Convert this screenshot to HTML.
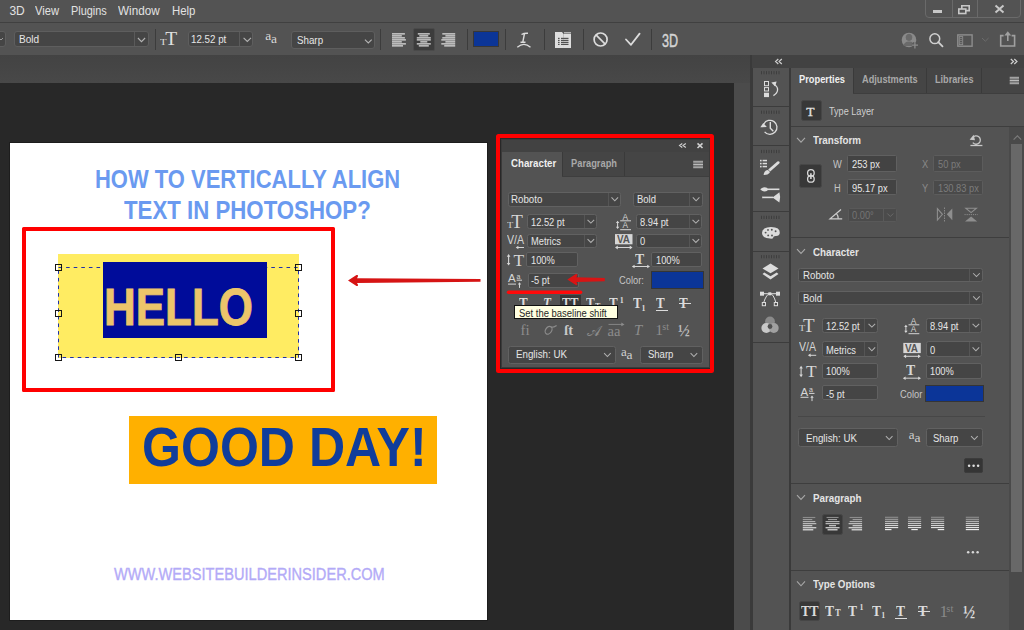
<!DOCTYPE html>
<html><head><meta charset="utf-8">
<style>
*{margin:0;padding:0;box-sizing:border-box}
html,body{width:1024px;height:630px;overflow:hidden;background:#282828;font-family:"Liberation Sans",sans-serif;color:#dcdcdc}
.a{position:absolute}
.t{position:absolute;white-space:nowrap;line-height:1}
.inp{position:absolute;background:#454545;border:1px solid #575757;border-radius:2px}
.dd{position:absolute;background:#454545;border:1px solid #575757;border-radius:2px}
.dv{position:absolute;top:0;bottom:0;width:1px;background:#585858}
.sep{position:absolute;width:1px;background:#3c3c3c}
svg{position:absolute;overflow:visible}
</style></head><body>

<!-- menu bar -->
<div class="a" style="left:0;top:0;width:1024px;height:22px;background:#535353"></div>
<div class="a" style="left:0;top:22px;width:1024px;height:1px;background:#404040"></div>
<!-- options bar -->
<div class="a" style="left:0;top:23px;width:1024px;height:32px;background:#535353"></div>
<!-- tab band -->
<div class="a" style="left:0;top:55px;width:750px;height:28.3px;background:linear-gradient(#434343,#484848)"></div>
<!-- vertical strip -->
<div class="a" style="left:734px;top:83.3px;width:16px;height:547px;background:#4b4b4b"></div>

<!-- dock -->


<!-- document -->
<div class="a" style="left:10px;top:143px;width:477px;height:476.5px;background:#fff;box-shadow:0 0 0 1px #1d1d1d"></div>

<!-- floating char panel -->



<!-- menu text -->
<div class="t" style="left:9.4px;top:5px;font-size:12px;color:#e2e2e2">3D</div>
<div class="t" style="left:35.2px;top:5px;font-size:12px;color:#e2e2e2;transform:scaleX(0.93);transform-origin:0 0">View</div>
<div class="t" style="left:70.9px;top:5px;font-size:12px;color:#e2e2e2;transform:scaleX(0.91);transform-origin:0 0">Plugins</div>
<div class="t" style="left:118.2px;top:5px;font-size:12px;color:#e2e2e2;transform:scaleX(0.975);transform-origin:0 0">Window</div>
<div class="t" style="left:171.5px;top:5px;font-size:12px;color:#e2e2e2;transform:scaleX(0.95);transform-origin:0 0">Help</div>
<!-- window controls -->
<div class="a" style="left:924.5px;top:-2px;width:96.5px;height:19.5px;border:1px solid #6a6a6a;border-radius:0 0 4px 4px"></div>
<div class="a" style="left:952px;top:0;width:1px;height:17px;background:#6a6a6a"></div>
<div class="a" style="left:977px;top:0;width:1px;height:17px;background:#6a6a6a"></div>
<div class="a" style="left:933px;top:10px;width:9px;height:3px;background:#c8c8c8"></div>
<svg style="left:0;top:0" width="1024" height="30">
<g fill="none" stroke="#c8c8c8" stroke-width="1.6">
<rect x="958.8" y="9" width="7" height="4.5"/>
<path d="M961.8,9 V5.8 H969.2 V10.6 H965.8"/>
<path d="M995.5,5.5 L1003.5,12.5 M1003.5,5.5 L995.5,12.5" stroke-width="2"/>
</g>
</svg>


<!-- options bar content -->
<div class="dd" style="left:-10px;top:30.5px;width:15.5px;height:16px;border-color:#5e5e5e;border-radius:3px"></div>
<svg style="left:0;top:0" width="10" height="60"><path d="M-1,38 L1,40 L3,38" fill="none" stroke="#9a9a9a" stroke-width="1"/></svg>
<div class="dd" style="left:14px;top:30.5px;width:134.5px;height:16.5px;border-color:#5e5e5e;border-radius:3px"><div class="dv" style="left:118.5px;background:#5a5a5a"></div></div>
<div class="t" style="left:19.4px;top:34px;font-size:10.5px;color:#e6e6e6;transform:scaleX(0.96);transform-origin:0 0">Bold</div>
<div class="sep" style="left:154.5px;top:29px;height:21px"></div>
<div class="t" style="left:160.30px;top:38px;font-size:9px;color:#e0e0e0;font-family:'Liberation Serif';transform:scaleX(1.2);transform-origin:0 0">T</div>
<div class="t" style="left:165.30px;top:29px;font-size:19.5px;color:#e0e0e0;font-family:'Liberation Serif'">T</div>
<div class="dd" style="left:187.9px;top:31px;width:65.5px;height:15.5px;border-color:#5e5e5e;border-radius:3px"><div class="dv" style="left:50.6px;background:#5a5a5a"></div></div>
<div class="t" style="left:190.6px;top:34.3px;font-size:10.5px;color:#e6e6e6;transform:scaleX(0.93);transform-origin:0 0">12.52 pt</div>
<div class="t" style="left:265.3px;top:29.3px;font-size:13.5px;font-family:'Liberation Serif';color:#d8d8d8">a</div>
<div class="t" style="left:271px;top:32.3px;font-size:13.5px;font-family:'Liberation Serif';color:#d8d8d8">a</div>
<div class="dd" style="left:290.9px;top:31.3px;width:84px;height:18px;border-color:#5e5e5e;border-radius:3px"></div>
<div class="t" style="left:296.7px;top:34.8px;font-size:10.5px;color:#e6e6e6;transform:scaleX(0.93);transform-origin:0 0">Sharp</div>
<div class="sep" style="left:380px;top:29px;height:21px"></div>
<div class="a" style="left:413px;top:28px;width:22px;height:23px;background:#3c3c3c;border:1px solid #4a4a4a;border-radius:2px"></div>
<div class="sep" style="left:467px;top:29px;height:21px"></div>
<div class="a" style="left:472.8px;top:30.9px;width:26px;height:16.5px;background:#0b3597;border:1px solid #373737"></div>
<div class="sep" style="left:504.5px;top:29px;height:21px"></div>
<div class="sep" style="left:543.5px;top:29px;height:21px"></div>
<div class="sep" style="left:582.5px;top:29px;height:21px"></div>
<div class="sep" style="left:651px;top:29px;height:21px"></div>
<svg style="left:0;top:0" width="1024" height="60">
<g stroke="#e0e0e0" stroke-width="1.1" fill="none">
<path d="M392,33.9h12.9 M392,35.9h9.8 M392,37.9h12.9 M392,39.9h13.9 M392,41.9h9.8 M392,43.9h13.9 M392,45.9h11"/>
<path d="M417.8,33.9h12 M419.3,35.9h9 M416.8,37.9h14 M416.8,39.9h14 M420.3,41.9h7 M416.8,43.9h14 M418.8,45.9h10"/>
<path d="M442.3,33.9h12.9 M445.4,35.9h9.8 M442.3,37.9h12.9 M441.3,39.9h13.9 M445.4,41.9h9.8 M441.3,43.9h13.9 M444.2,45.9h11"/>
</g>
<g fill="none" stroke="#dcdcdc">
<path d="M521.5,34.5 Q524,33 528,33.2 M524.5,33.5 L522.8,42.2 M520.5,42.3 L525.5,42.3" stroke-width="1.4"/>
<path d="M517.3,47.3 Q524,41.5 530.5,47.3" stroke-width="1.3"/>
</g>
<path d="M555,32 H562 L563.5,34 V48 H555 Z" fill="#dedede"/>
<path d="M563.5,34 H571 V48 H563 Z" fill="#dedede"/>
<path d="M564,32.3 H571 V33.4 H564 Z" fill="#dedede"/>
<g fill="#535353"><rect x="558" y="37.8" width="1.6" height="1.2"/><rect x="558" y="39.8" width="1.6" height="1.2"/><rect x="558" y="41.8" width="1.6" height="1.2"/><rect x="558" y="43.8" width="1.6" height="1.2"/>
<rect x="561" y="37.8" width="7.5" height="1.2"/><rect x="561" y="39.8" width="7.5" height="1.2"/><rect x="561" y="41.8" width="7.5" height="1.2"/><rect x="561" y="43.8" width="7.5" height="1.2"/></g>
<circle cx="600.6" cy="39.5" r="6.5" fill="none" stroke="#dcdcdc" stroke-width="1.7"/>
<path d="M596,34.9 L605.2,44.1" stroke="#dcdcdc" stroke-width="1.7"/>
<path d="M626,39.5 L631,44.8 L639.6,33.6" fill="none" stroke="#dcdcdc" stroke-width="1.8" stroke-linecap="round" stroke-linejoin="round"/>
</svg>
<div class="t" style="left:662.30px;top:32px;font-size:18.5px;color:#d4d4d4;transform:scaleX(0.68);transform-origin:0 0;-webkit-text-stroke:0.5px #d4d4d4">3D</div>
<svg style="left:0;top:0" width="1024" height="60">
<circle cx="909" cy="40" r="7.3" fill="#8a8a8a"/>
<path d="M909,33.8 a3.3,3.6 0 1 1 -0.01,0 Z" fill="#6a6a6a"/>
<path d="M903.5,46 Q904,41.5 909,41.5 Q914,41.5 914.5,46 Z" fill="#6a6a6a"/>
<path d="M911.8,45.2 H918 M914.9,42 V48.4" stroke="#535353" stroke-width="3.2"/>
<path d="M911.8,45.2 H918 M914.9,42 V48.4" stroke="#8a8a8a" stroke-width="1.3"/>
<circle cx="934.8" cy="38.7" r="4.9" fill="none" stroke="#d0d0d0" stroke-width="1.5"/>
<path d="M938.3,42.2 L942.5,46.4" stroke="#d0d0d0" stroke-width="1.8" stroke-linecap="round"/>
<rect x="957.8" y="34.9" width="14.3" height="11.3" fill="none" stroke="#8e8e8e" stroke-width="1.4"/>
<rect x="959.3" y="36.6" width="3.4" height="8" fill="none" stroke="#8e8e8e" stroke-width="0.9"/><circle cx="961" cy="38.4" r="0.75" fill="#8e8e8e"/><circle cx="961" cy="40.6" r="0.75" fill="#8e8e8e"/><circle cx="961" cy="42.8" r="0.75" fill="#8e8e8e"/>
<path d="M982,38 L985.3,41.2 L988.6,38" fill="none" stroke="#6c6c6c" stroke-width="1"/>
<path d="M1003.6,35.6 H1000.7 V46 H1014.6 V35.6 H1011.6" fill="none" stroke="#a0a0a0" stroke-width="1.6"/>
<path d="M1007.8,41 V33.5" stroke="#a0a0a0" stroke-width="1.6"/>
<path d="M1004.4,35.6 L1007.8,31.3 L1011.2,35.6 Z" fill="#a0a0a0"/>
</svg>

<svg style="left:0;top:0" width="1024" height="60"><g fill="none" stroke="#b4b4b4" stroke-width="1.1">
<path d="M137.9,38 L141.5,41.6 L145.1,38"/>
<path d="M243.6,37.8 L247.3,41.5 L251,37.8"/>
<path d="M364.9,39.6 L368.3,43 L371.7,39.6"/>
</g></svg>
<!-- /opt-chev -->
<!-- document content -->
<div class="t" style="left:94.7px;top:167px;font-size:25.6px;font-weight:bold;color:#6a9af0;transform:scaleX(0.8585);transform-origin:0 0">HOW TO VERTICALLY ALIGN</div>
<div class="t" style="left:123.9px;top:198px;font-size:25.6px;font-weight:bold;color:#6a9af0;transform:scaleX(0.869);transform-origin:0 0">TEXT IN PHOTOSHOP?</div>
<div class="a" style="left:22px;top:227px;width:313px;height:164.5px;border:4.3px solid #ff0000;border-radius:1.5px"></div>
<div class="a" style="left:58px;top:254.2px;width:241px;height:103.8px;background:#ffec62"></div>
<svg style="left:0;top:0" width="1024" height="630">
<rect x="58.5" y="267.5" width="240" height="90" fill="none" stroke="#2030a8" stroke-width="1" stroke-dasharray="3.6,4"/>
</svg>
<div class="a" style="left:103px;top:262px;width:163.6px;height:75.7px;background:#000c9a"></div>
<div class="t" style="left:103.8px;top:281.8px;font-size:51px;font-weight:bold;color:#ecc56a;transform:scaleX(0.862);transform-origin:0 0;-webkit-text-stroke:0.8px #ecc56a">HELLO</div>
<svg style="left:0;top:0" width="1024" height="630">
<g fill="none" stroke="#161616" stroke-width="1"><rect x="55.5" y="264.5" width="6" height="6"/><rect x="295.5" y="264.5" width="6" height="6"/><rect x="55.5" y="310.5" width="6" height="6"/><rect x="295.5" y="310.5" width="6" height="6"/><rect x="55.5" y="354.5" width="6" height="6"/><rect x="175.5" y="354.5" width="6" height="6"/><rect x="295.5" y="354.5" width="6" height="6"/></g>
<path d="M480.5,279.1 L357,278.2 L358,276.3 Q358.3,274.5 356.5,275.1 L348,280.5 L356.5,285.9 Q358.3,286.5 358,284.7 L357,282.9 L480.5,281.8 Z" fill="#d61414"/>
</svg>
<div class="a" style="left:128.7px;top:416.3px;width:308.7px;height:67.7px;background:#ffb000"></div>
<div class="t" style="left:142.4px;top:418.7px;font-size:56px;font-weight:bold;color:#103d9b;transform:scaleX(0.894);transform-origin:0 0">GOOD DAY!</div>
<div class="t" style="left:114.3px;top:567.3px;font-size:16px;color:#b3aaf7;transform:scaleX(0.912);transform-origin:0 0;-webkit-text-stroke:0.35px #b3aaf7">WWW.WEBSITEBUILDERINSIDER.COM</div>
<!--DOCK-->
<div class="a" style="left:750.00px;top:55.00px;width:274.00px;height:575.00px;background:#3a3a3a"></div>
<div class="a" style="left:752.00px;top:55.00px;width:272.00px;height:12.50px;background:#424242"></div>
<svg style="left:0;top:0" width="1" height="1"><g fill="none" stroke="#d0d0d0" stroke-width="1.2"><path d="M778.3,59 L775.6,61.5 L778.3,64 M781.8,59 L779.1,61.5 L781.8,64"/><path d="M1010.8,59 L1013.5,61.5 L1010.8,64 M1014.3,59 L1017,61.5 L1014.3,64"/></g></svg>
<div class="a" style="left:752.50px;top:67.50px;width:36.00px;height:562.50px;background:#535353"></div>
<div class="a" style="left:752.50px;top:105.60px;width:36.00px;height:1.40px;background:#3c3c3c"></div>
<div class="a" style="left:752.50px;top:145.10px;width:36.00px;height:1.20px;background:#3c3c3c"></div>
<div class="a" style="left:752.50px;top:210.50px;width:36.00px;height:1.70px;background:#3c3c3c"></div>
<div class="a" style="left:752.50px;top:250.60px;width:36.00px;height:0.90px;background:#3c3c3c"></div>
<div class="a" style="left:752.50px;top:341.80px;width:36.00px;height:1.60px;background:#3c3c3c"></div>
<svg style="left:0;top:0" width="1" height="1"><g stroke="#3e3e3e" stroke-width="1"><path d="M761.5,71.1 v3.2"/><path d="M764.0,71.1 v3.2"/><path d="M766.5,71.1 v3.2"/><path d="M769.0,71.1 v3.2"/><path d="M771.5,71.1 v3.2"/><path d="M774.0,71.1 v3.2"/><path d="M776.5,71.1 v3.2"/><path d="M779.0,71.1 v3.2"/><path d="M761.5,110.6 v3.2"/><path d="M764.0,110.6 v3.2"/><path d="M766.5,110.6 v3.2"/><path d="M769.0,110.6 v3.2"/><path d="M771.5,110.6 v3.2"/><path d="M774.0,110.6 v3.2"/><path d="M776.5,110.6 v3.2"/><path d="M779.0,110.6 v3.2"/><path d="M761.5,149.9 v3.2"/><path d="M764.0,149.9 v3.2"/><path d="M766.5,149.9 v3.2"/><path d="M769.0,149.9 v3.2"/><path d="M771.5,149.9 v3.2"/><path d="M774.0,149.9 v3.2"/><path d="M776.5,149.9 v3.2"/><path d="M779.0,149.9 v3.2"/><path d="M761.5,215.8 v3.2"/><path d="M764.0,215.8 v3.2"/><path d="M766.5,215.8 v3.2"/><path d="M769.0,215.8 v3.2"/><path d="M771.5,215.8 v3.2"/><path d="M774.0,215.8 v3.2"/><path d="M776.5,215.8 v3.2"/><path d="M779.0,215.8 v3.2"/><path d="M761.5,255.1 v3.2"/><path d="M764.0,255.1 v3.2"/><path d="M766.5,255.1 v3.2"/><path d="M769.0,255.1 v3.2"/><path d="M771.5,255.1 v3.2"/><path d="M774.0,255.1 v3.2"/><path d="M776.5,255.1 v3.2"/><path d="M779.0,255.1 v3.2"/></g></svg>
<svg style="left:0;top:0" width="1" height="1"><rect x="764.5" y="81.5" width="4" height="4.2" fill="none" stroke="#dcdcdc" stroke-width="1"/><rect x="764.5" y="87.6" width="4" height="3.4" fill="none" stroke="#dcdcdc" stroke-width="1"/><rect x="764" y="92.7" width="5" height="4.4" fill="#dcdcdc"/><path d="M774.2,84.5 Q777.8,86.5 777.6,90 Q777.2,93.5 773.4,95.6" fill="none" stroke="#dcdcdc" stroke-width="1.3"/><path d="M771.3,82.6 L776.6,81.4 L775.2,86.4 Z" fill="#dcdcdc"/><path d="M763.8,124 A7,7 0 1 1 764.6,131.8" fill="none" stroke="#dcdcdc" stroke-width="1.3"/><path d="M760.3,127.3 L763.3,123 L766.8,127 Z" fill="#dcdcdc"/><path d="M770.3,122 V128.3 L773.3,131.3" fill="none" stroke="#dcdcdc" stroke-width="1.4"/><rect x="760" y="159.8" width="1.6" height="1.6" fill="#dcdcdc"/><rect x="762.6" y="159.8" width="4.4" height="1.5" fill="#dcdcdc"/><rect x="760" y="162.8" width="1.6" height="1.6" fill="#dcdcdc"/><rect x="762.6" y="162.8" width="4.4" height="1.5" fill="#dcdcdc"/><rect x="760" y="165.8" width="1.6" height="1.6" fill="#dcdcdc"/><rect x="762.6" y="165.8" width="4.4" height="1.5" fill="#dcdcdc"/><path d="M779.6,162 Q779.8,163 779,163.8 L770.2,171.6 L768.2,169.6 L777.4,161.6 Q778.6,160.9 779.6,162 Z" fill="#dcdcdc"/><path d="M763.6,175 Q763.8,170.6 767.6,169.9 Q770,170.5 769.8,172.8 Q767.8,175.2 763.6,175 Z" fill="#dcdcdc"/><path d="M760.2,189.3 Q763.3,185.9 767.4,187.9 V190.8 Q763.3,192.7 760.2,189.3 Z" fill="#dcdcdc"/><path d="M767,189.3 H779.4" stroke="#dcdcdc" stroke-width="1.6"/><path d="M762.2,197.4 H773" stroke="#dcdcdc" stroke-width="1.6"/><path d="M772.5,197.4 L779.4,192.2 Q781,197.4 779.4,202.4 Z" fill="#dcdcdc"/><path d="M771,227 Q780.3,227.2 779.8,233 Q779.4,236.3 775.5,236 Q773,236 773.3,237.5 Q773,239 770,238.6 Q762,238 762,233 Q762.3,227 771,227 Z" fill="#dcdcdc"/><circle cx="765.6" cy="232.6" r="0.95" fill="#535353"/><circle cx="768.2" cy="235.4" r="0.95" fill="#535353"/><circle cx="772" cy="235.5" r="0.95" fill="#535353"/><circle cx="775.6" cy="231.2" r="0.95" fill="#535353"/><circle cx="771.8" cy="229.8" r="0.95" fill="#535353"/><circle cx="768" cy="229.9" r="0.95" fill="#535353"/><path d="M770.5,263.5 L778.5,268.4 L770.5,273.3 L762.5,268.4 Z" fill="#dcdcdc"/><path d="M764.3,272.4 L770.5,276.2 L776.7,272.4 L778.5,273.9 L770.5,279.4 L762.5,273.9 Z" fill="#dcdcdc"/><path d="M763,293.7 H777.5" stroke="#dcdcdc" stroke-width="1"/><path d="M763.5,303 Q766.5,293.7 770,293.7 Q773.5,293.7 776,303" fill="none" stroke="#dcdcdc" stroke-width="1"/><rect x="760" y="291.7" width="4" height="4" fill="#dcdcdc"/><rect x="776" y="291.7" width="4" height="4" fill="#dcdcdc"/><rect x="768.3" y="292.3" width="3" height="3" fill="#dcdcdc"/><rect x="762.3" y="302.5" width="3.2" height="3.2" fill="none" stroke="#dcdcdc" stroke-width="1"/><rect x="774.3" y="302.5" width="3.2" height="3.2" fill="none" stroke="#dcdcdc" stroke-width="1"/><circle cx="770" cy="321.5" r="4.9" fill="#8a8a8a"/><circle cx="766.3" cy="328" r="4.9" fill="#c8c8c8"/><circle cx="773.8" cy="328" r="4.9" fill="#a0a0a0"/><circle cx="770" cy="326.5" r="2.4" fill="#505050"/></svg>
<div class="a" style="left:791.00px;top:67.50px;width:233.00px;height:562.50px;background:#535353"></div>
<div class="a" style="left:853.00px;top:67.50px;width:171.00px;height:26.30px;background:#454545"></div>
<div class="a" style="left:853.00px;top:67.50px;width:1.00px;height:26.30px;background:#3a3a3a"></div>
<div class="a" style="left:926.00px;top:67.50px;width:1.00px;height:26.30px;background:#3a3a3a"></div>
<div class="a" style="left:981.00px;top:67.50px;width:1.00px;height:26.30px;background:#3a3a3a"></div>
<div class="a" style="left:853.00px;top:93.00px;width:171.00px;height:1.00px;background:#3e3e3e"></div>
<div class="t" style="left:799.20px;top:75px;font-size:10px;font-weight:bold;color:#efefef;transform:scaleX(0.93);transform-origin:0 0">Properties</div>
<div class="t" style="left:862.20px;top:75px;font-size:10px;font-weight:bold;color:#a9a9a9;transform:scaleX(0.92);transform-origin:0 0">Adjustments</div>
<div class="t" style="left:935.30px;top:75px;font-size:10px;font-weight:bold;color:#a9a9a9;transform:scaleX(0.91);transform-origin:0 0">Libraries</div>
<svg style="left:0;top:0" width="1" height="1"><g stroke="#c8c8c8" stroke-width="0.9"><path d="M1009.7,77.3 H1019"/><path d="M1009.7,78.9 H1019"/><path d="M1009.7,80.5 H1019"/><path d="M1009.7,82.1 H1019"/><path d="M1009.7,83.7 H1019"/></g></svg>
<div class="a" style="left:801.00px;top:99.80px;width:21.20px;height:21.30px;background:#383838;border:1px solid #464646;border-radius:2.5px"></div>
<div class="t" style="left:806.20px;top:105px;font-size:13.5px;color:#e2e2e2;font-family:'Liberation Serif';-webkit-text-stroke:0.3px #e2e2e2">T</div>
<div class="t" style="left:828.50px;top:107px;font-size:10px;color:#cfcfcf;transform:scaleX(0.91);transform-origin:0 0">Type Layer</div>
<div class="a" style="left:791.00px;top:126.00px;width:233.00px;height:1.30px;background:#3e3e3e"></div>
<div class="a" style="left:1009.30px;top:127.30px;width:14.70px;height:502.70px;background:#4a4a4a"></div>
<div class="a" style="left:1010.60px;top:143.60px;width:11.60px;height:428.10px;background:#686868"></div>
<svg style="left:0;top:0" width="1" height="1"><path d="M1013.6,139.6 L1017.4,135.8 L1021.2,139.6" fill="none" stroke="#7a7a7a" stroke-width="1.2"/></svg>
<div class="a" style="left:791.00px;top:237.20px;width:218.30px;height:1.30px;background:#3e3e3e"></div>
<div class="a" style="left:791.00px;top:482.80px;width:218.30px;height:1.30px;background:#3e3e3e"></div>
<div class="a" style="left:791.00px;top:570.20px;width:218.30px;height:1.30px;background:#3e3e3e"></div>
<svg style="left:0;top:0" width="1" height="1"><path d="M797.00,137.85 L801.00,142.15 L805.00,137.85" fill="none" stroke="#a8a8a8" stroke-width="1.1"/></svg>
<div class="t" style="left:812.80px;top:136px;font-size:10px;font-weight:bold;color:#e4e4e4;transform:scaleX(0.98);transform-origin:0 0">Transform</div>
<svg style="left:0;top:0" width="1" height="1"><g fill="none" stroke="#c8c8c8" stroke-width="1.3"><path d="M972.6,137.8 A4.2,4.2 0 1 1 972.8,142.6"/><path d="M970.4,145.5 H982.4"/></g><path d="M969.6,139.7 L973.6,134.8 L975,140.2 Z" fill="#c8c8c8"/></svg>
<div class="a" style="left:799.20px;top:163.70px;width:22.90px;height:24.40px;background:#383838;border:1px solid #474747;border-radius:2.5px"></div>
<svg style="left:0;top:0" width="1" height="1"><g fill="none" stroke="#d8d8d8" stroke-width="1.3"><rect x="807.6" y="169.6" width="6.6" height="6.6" rx="3.3"/><rect x="807.6" y="175.6" width="6.6" height="6.6" rx="3.3"/><path d="M810.9,173.2 V179" stroke-width="1.6"/></g></svg>
<div class="t" style="left:832.50px;top:160px;font-size:10px;color:#c4c4c4;transform:scaleX(0.93);transform-origin:0 0">W</div>
<div class="t" style="left:834.30px;top:184px;font-size:10px;color:#c4c4c4;transform:scaleX(0.93);transform-origin:0 0">H</div>
<div class="a" style="left:847.40px;top:155.40px;width:49.70px;height:16.30px;background:#434343;border:1px solid #606060;border-radius:1.5px"></div>
<div class="a" style="left:847.40px;top:179.20px;width:49.70px;height:15.80px;background:#434343;border:1px solid #606060;border-radius:1.5px"></div>
<div class="t" style="left:851.50px;top:160px;font-size:10px;color:#e8e8e8;transform:scaleX(0.93);transform-origin:0 0">253 px</div>
<div class="t" style="left:851.50px;top:184px;font-size:10px;color:#e8e8e8;transform:scaleX(0.93);transform-origin:0 0">95.17 px</div>
<div class="t" style="left:921.70px;top:160px;font-size:10px;color:#8a8a8a;transform:scaleX(0.93);transform-origin:0 0">X</div>
<div class="t" style="left:921.70px;top:184px;font-size:10px;color:#8a8a8a;transform:scaleX(0.93);transform-origin:0 0">Y</div>
<div class="a" style="left:932.80px;top:155.20px;width:50.00px;height:16.60px;background:#4a4a4a;border:1px solid #5c5c5c;border-radius:1.5px"></div>
<div class="a" style="left:932.80px;top:179.80px;width:50.00px;height:15.00px;background:#4a4a4a;border:1px solid #5c5c5c;border-radius:1.5px"></div>
<div class="t" style="left:938.30px;top:160px;font-size:10px;color:#7c7c7c;transform:scaleX(0.93);transform-origin:0 0">50 px</div>
<div class="t" style="left:938.30px;top:184px;font-size:10px;color:#7c7c7c;transform:scaleX(0.93);transform-origin:0 0">130.83 px</div>
<svg style="left:0;top:0" width="1" height="1"><g fill="none" stroke="#d0d0d0" stroke-width="1.2"><path d="M841,209.5 L830,218.8 H842.2"/><path d="M836.5,213.6 Q838.3,215.6 838.2,218.8"/></g></svg>
<div class="a" style="left:848.00px;top:207.70px;width:49.10px;height:14.30px;background:#4b4b4b;border:1px solid #595959;border-radius:1.5px"></div>
<div class="a" style="left:883.30px;top:208.70px;width:1.00px;height:12.30px;background:#5a5a5a"></div>
<svg style="left:0;top:0" width="1" height="1"><path d="M887.30,213.50 L890.30,216.50 L893.30,213.50" fill="none" stroke="#6a6a6a" stroke-width="1"/></svg>
<div class="t" style="left:851.50px;top:211px;font-size:10px;color:#747474;transform:scaleX(0.93);transform-origin:0 0">0.00°</div>
<svg style="left:0;top:0" width="1" height="1"><path d="M937.4,208.6 L942.4,214.3 L937.4,220 Z" fill="none" stroke="#8e8e8e" stroke-width="1.1"/><path d="M944.5,207.5 V221.5" stroke="#8e8e8e" stroke-width="0.9" stroke-dasharray="1.5,1"/><path d="M952.3,208.4 L946.8,214.3 L952.3,220.2 Z" fill="#8e8e8e"/><path d="M965.8,208.3 H976.4 L971.1,212.6 Z" fill="none" stroke="#8e8e8e" stroke-width="1.1"/><path d="M964.5,214.6 H977.7" stroke="#8e8e8e" stroke-width="0.9" stroke-dasharray="1.2,0.9"/><path d="M965,221.6 H977.2 L971.1,216.4 Z" fill="#8e8e8e"/></svg>
<!--/DOCK-->
<!--PROPS-->
<svg style="left:0;top:0" width="1" height="1"><path d="M797.00,249.15 L801.00,253.45 L805.00,249.15" fill="none" stroke="#a8a8a8" stroke-width="1.1"/></svg>
<div class="t" style="left:812.80px;top:248px;font-size:10px;font-weight:bold;color:#e4e4e4;transform:scaleX(0.98);transform-origin:0 0">Character</div>
<div class="a" style="left:798.20px;top:267.80px;width:184.50px;height:14.20px;background:#454545;border:1px solid #616161;border-radius:2.5px"></div>
<div class="a" style="left:969.20px;top:268.80px;width:1.00px;height:12.20px;background:#555555"></div>
<svg style="left:0;top:0" width="1" height="1"><path d="M973.15,273.25 L976.45,276.55 L979.75,273.25" fill="none" stroke="#b0b0b0" stroke-width="1.05"/></svg>
<div class="t" style="left:802.80px;top:271px;font-size:10px;color:#e6e6e6;transform:scaleX(0.97);transform-origin:0 0">Roboto</div>
<div class="a" style="left:798.20px;top:290.70px;width:184.50px;height:14.80px;background:#454545;border:1px solid #616161;border-radius:2.5px"></div>
<div class="a" style="left:969.20px;top:291.70px;width:1.00px;height:12.80px;background:#555555"></div>
<svg style="left:0;top:0" width="1" height="1"><path d="M973.15,296.45 L976.45,299.75 L979.75,296.45" fill="none" stroke="#b0b0b0" stroke-width="1.05"/></svg>
<div class="t" style="left:802.80px;top:294px;font-size:10px;color:#e6e6e6;transform:scaleX(0.95);transform-origin:0 0">Bold</div>
<div class="t" style="left:798.50px;top:324px;font-size:8.5px;color:#d6d6d6;font-family:'Liberation Serif';transform:scaleX(1.2);transform-origin:0 0">T</div>
<div class="t" style="left:803.10px;top:316px;font-size:19px;color:#d6d6d6;font-family:'Liberation Serif'">T</div>
<div class="a" style="left:821.80px;top:317.50px;width:56.50px;height:15.90px;background:#454545;border:1px solid #616161;border-radius:2.5px"></div>
<div class="a" style="left:864.40px;top:318.50px;width:1.00px;height:13.90px;background:#555555"></div>
<svg style="left:0;top:0" width="1" height="1"><path d="M868.55,323.80 L871.85,327.10 L875.15,323.80" fill="none" stroke="#b0b0b0" stroke-width="1.05"/></svg>
<div class="t" style="left:825.90px;top:322px;font-size:10px;color:#e6e6e6;transform:scaleX(0.93);transform-origin:0 0">12.52 pt</div>
<svg style="left:0;top:0" width="1" height="1"><g fill="none" stroke="#d6d6d6" stroke-width="1"><path d="M905.9,325.8 V332.0"/><path d="M908.5,324.8 H919.3 M908.5,333.7 H919.3" stroke-width="1"/></g><path d="M904.1999999999999,327.1 L905.9,324.8 L907.5999999999999,327.1 Z M904.1999999999999,330.7 L905.9,333.0 L907.5999999999999,330.7 Z" fill="#d6d6d6"/></svg>
<div class="t" style="left:910.80px;top:317px;font-size:8.3px;color:#d6d6d6">A</div>
<div class="t" style="left:910.80px;top:325px;font-size:8.3px;color:#d6d6d6">A</div>
<div class="a" style="left:925.90px;top:317.50px;width:56.30px;height:15.90px;background:#454545;border:1px solid #616161;border-radius:2.5px"></div>
<div class="a" style="left:968.60px;top:318.50px;width:1.00px;height:13.90px;background:#555555"></div>
<svg style="left:0;top:0" width="1" height="1"><path d="M972.60,323.80 L975.90,327.10 L979.20,323.80" fill="none" stroke="#b0b0b0" stroke-width="1.05"/></svg>
<div class="t" style="left:929.70px;top:322px;font-size:10px;color:#e6e6e6;transform:scaleX(0.93);transform-origin:0 0">8.94 pt</div>
<div class="t" style="left:798.80px;top:341px;font-size:12.3px;color:#d6d6d6;transform:scaleX(0.86);transform-origin:0 0">V/A</div>
<svg style="left:0;top:0" width="1" height="1"><path d="M809.2,355.3 H816.2" stroke="#d6d6d6" stroke-width="1"/><path d="M807.9000000000001,355.3 L810.6,353.5 V357.1 Z" fill="#d6d6d6"/></svg>
<div class="a" style="left:821.80px;top:341.40px;width:56.50px;height:15.40px;background:#454545;border:1px solid #616161;border-radius:2.5px"></div>
<div class="a" style="left:864.40px;top:342.40px;width:1.00px;height:13.40px;background:#555555"></div>
<svg style="left:0;top:0" width="1" height="1"><path d="M868.55,347.45 L871.85,350.75 L875.15,347.45" fill="none" stroke="#b0b0b0" stroke-width="1.05"/></svg>
<div class="t" style="left:825.90px;top:346px;font-size:10px;color:#e6e6e6;transform:scaleX(0.93);transform-origin:0 0">Metrics</div>
<svg style="left:0;top:0" width="1" height="1"><rect x="903.3" y="342.9" width="17.5" height="10.2" fill="#d6d6d6"/><path d="M904.3,356.29999999999995 H919.8" stroke="#d6d6d6" stroke-width="1"/><path d="M903.3,356.29999999999995 L906.0999999999999,354.4 V358.2 Z M920.8,356.29999999999995 L918.0,354.4 V358.2 Z" fill="#d6d6d6"/></svg>
<div class="t" style="left:904.90px;top:343px;font-size:11px;font-weight:bold;color:#555555;transform:scaleX(0.9);transform-origin:0 0">VA</div>
<div class="a" style="left:925.90px;top:341.40px;width:56.30px;height:15.40px;background:#454545;border:1px solid #616161;border-radius:2.5px"></div>
<div class="a" style="left:968.60px;top:342.40px;width:1.00px;height:13.40px;background:#555555"></div>
<svg style="left:0;top:0" width="1" height="1"><path d="M972.60,347.45 L975.90,350.75 L979.20,347.45" fill="none" stroke="#b0b0b0" stroke-width="1.05"/></svg>
<div class="t" style="left:930.00px;top:346px;font-size:10px;color:#e6e6e6;transform:scaleX(0.93);transform-origin:0 0">0</div>
<svg style="left:0;top:0" width="1" height="1"><path d="M801.1,367.5 V375" stroke="#d6d6d6" stroke-width="1.1"/><path d="M799.3,368.4 L801.1,365.8 L802.9,368.4 Z M799.3,374.6 L801.1,377.2 L802.9,374.6 Z" fill="#d6d6d6"/></svg>
<div class="t" style="left:806.10px;top:363px;font-size:17.4px;color:#d6d6d6;font-family:'Liberation Serif'">T</div>
<div class="a" style="left:821.80px;top:363.10px;width:56.50px;height:15.50px;background:#454545;border:1px solid #616161;border-radius:2px"></div>
<div class="t" style="left:825.90px;top:367px;font-size:10px;color:#e6e6e6;transform:scaleX(0.93);transform-origin:0 0">100%</div>
<div class="t" style="left:905.80px;top:363px;font-size:14.5px;font-weight:bold;color:#d6d6d6;font-family:'Liberation Serif';transform:scaleX(0.95);transform-origin:0 0">T</div>
<svg style="left:0;top:0" width="1" height="1"><path d="M904.3,378.2 H919.5" stroke="#d6d6d6" stroke-width="1"/><path d="M902.8,378.2 L905.5999999999999,376.4 V380.0 Z M921.0,378.2 L918.1999999999999,376.4 V380.0 Z" fill="#d6d6d6"/></svg>
<div class="a" style="left:925.90px;top:363.10px;width:56.30px;height:15.50px;background:#454545;border:1px solid #616161;border-radius:2px"></div>
<div class="t" style="left:929.90px;top:367px;font-size:10px;color:#e6e6e6;transform:scaleX(0.93);transform-origin:0 0">100%</div>
<div class="t" style="left:800.50px;top:387px;font-size:11.5px;color:#d6d6d6">A</div>
<div class="t" style="left:809.10px;top:386px;font-size:7px;color:#d6d6d6">a</div>
<svg style="left:0;top:0" width="1" height="1"><path d="M800.5,397.3 H808.5 M809.1,393.4 H814.5" stroke="#d6d6d6" stroke-width="1"/><path d="M812.0,397.0 V401.1" stroke="#d6d6d6" stroke-width="1"/><path d="M810.3,397.8 L812.0,395.4 L813.7,397.8 Z" fill="#d6d6d6"/></svg>
<div class="a" style="left:821.80px;top:385.40px;width:56.50px;height:15.10px;background:#454545;border:1px solid #616161;border-radius:2px"></div>
<div class="t" style="left:825.90px;top:390px;font-size:10px;color:#e6e6e6;transform:scaleX(0.93);transform-origin:0 0">-5 pt</div>
<div class="t" style="left:899.50px;top:390px;font-size:10px;color:#c6c6c6;transform:scaleX(0.93);transform-origin:0 0">Color</div>
<div class="a" style="left:925.20px;top:385.40px;width:58.50px;height:16.30px;background:#0b3598;border:1px solid #353535"></div>
<div class="a" style="left:798.40px;top:416.00px;width:186.60px;height:1.00px;background:#474747"></div>
<div class="a" style="left:798.40px;top:428.40px;width:99.80px;height:18.90px;background:#454545;border:1px solid #616161;border-radius:2.5px"></div>
<svg style="left:0;top:0" width="1" height="1"><path d="M885.90,436.20 L889.20,439.50 L892.50,436.20" fill="none" stroke="#b0b0b0" stroke-width="1.05"/></svg>
<div class="t" style="left:806.40px;top:434px;font-size:10px;color:#e6e6e6;transform:scaleX(0.975);transform-origin:0 0">English: UK</div>
<div class="t" style="left:908.80px;top:428px;font-size:13px;color:#d0d0d0;font-family:'Liberation Serif'">a</div>
<div class="t" style="left:914.50px;top:431px;font-size:13.5px;color:#d0d0d0;font-family:'Liberation Serif'">a</div>
<div class="a" style="left:925.60px;top:428.40px;width:57.80px;height:18.90px;background:#454545;border:1px solid #616161;border-radius:2.5px"></div>
<svg style="left:0;top:0" width="1" height="1"><path d="M971.10,436.20 L974.40,439.50 L977.70,436.20" fill="none" stroke="#b0b0b0" stroke-width="1.05"/></svg>
<div class="t" style="left:933.20px;top:434px;font-size:10px;color:#e6e6e6;transform:scaleX(0.95);transform-origin:0 0">Sharp</div>
<div class="a" style="left:963.60px;top:458.00px;width:19.80px;height:15.30px;background:#353535;border:1px solid #3c3c3c;border-radius:2px"></div>
<svg style="left:0;top:0" width="1" height="1"><circle cx="969.1" cy="465.8" r="1.25" fill="#e0e0e0"/><circle cx="973.6" cy="465.8" r="1.25" fill="#e0e0e0"/><circle cx="978.1" cy="465.8" r="1.25" fill="#e0e0e0"/></svg>
<svg style="left:0;top:0" width="1" height="1"><path d="M797.00,495.15 L801.00,499.45 L805.00,495.15" fill="none" stroke="#a8a8a8" stroke-width="1.1"/></svg>
<div class="t" style="left:812.80px;top:494px;font-size:10px;font-weight:bold;color:#e4e4e4;transform:scaleX(0.98);transform-origin:0 0">Paragraph</div>
<div class="a" style="left:822.00px;top:514.00px;width:20.80px;height:20.70px;background:#383838;border:1px solid #464646;border-radius:2.5px"></div>
<svg style="left:0;top:0" width="1" height="1"><path d="M802.80,517.50 h12.50" stroke="#8c8c8c" stroke-width="1.15"/><path d="M802.80,519.55 h9.50" stroke="#9c9c9c" stroke-width="1.15"/><path d="M802.80,521.60 h12.50" stroke="#b0b0b0" stroke-width="1.15"/><path d="M802.80,523.65 h13.50" stroke="#c4c4c4" stroke-width="1.15"/><path d="M802.80,525.70 h9.50" stroke="#d4d4d4" stroke-width="1.15"/><path d="M802.80,527.75 h13.50" stroke="#e2e2e2" stroke-width="1.15"/><path d="M802.80,529.80 h10.50" stroke="#ececec" stroke-width="1.15"/></svg>
<svg style="left:0;top:0" width="1" height="1"><path d="M826.55,517.50 h12.00" stroke="#8c8c8c" stroke-width="1.15"/><path d="M828.05,519.55 h9.00" stroke="#9c9c9c" stroke-width="1.15"/><path d="M825.55,521.60 h14.00" stroke="#b0b0b0" stroke-width="1.15"/><path d="M825.55,523.65 h14.00" stroke="#c4c4c4" stroke-width="1.15"/><path d="M829.05,525.70 h7.00" stroke="#d4d4d4" stroke-width="1.15"/><path d="M825.55,527.75 h14.00" stroke="#e2e2e2" stroke-width="1.15"/><path d="M827.55,529.80 h10.00" stroke="#ececec" stroke-width="1.15"/></svg>
<svg style="left:0;top:0" width="1" height="1"><path d="M849.60,517.50 h12.50" stroke="#8c8c8c" stroke-width="1.15"/><path d="M852.60,519.55 h9.50" stroke="#9c9c9c" stroke-width="1.15"/><path d="M849.60,521.60 h12.50" stroke="#b0b0b0" stroke-width="1.15"/><path d="M848.60,523.65 h13.50" stroke="#c4c4c4" stroke-width="1.15"/><path d="M852.60,525.70 h9.50" stroke="#d4d4d4" stroke-width="1.15"/><path d="M848.60,527.75 h13.50" stroke="#e2e2e2" stroke-width="1.15"/><path d="M851.60,529.80 h10.50" stroke="#ececec" stroke-width="1.15"/></svg>
<svg style="left:0;top:0" width="1" height="1"><path d="M885.00,517.30 h13.20" stroke="#8c8c8c" stroke-width="1.15"/><path d="M885.00,519.35 h13.20" stroke="#9c9c9c" stroke-width="1.15"/><path d="M885.00,521.40 h13.20" stroke="#b0b0b0" stroke-width="1.15"/><path d="M885.00,523.45 h13.20" stroke="#c4c4c4" stroke-width="1.15"/><path d="M885.00,525.50 h13.20" stroke="#d4d4d4" stroke-width="1.15"/><path d="M885.00,527.55 h13.20" stroke="#e2e2e2" stroke-width="1.15"/><path d="M885.00,529.60 h6.50" stroke="#ececec" stroke-width="1.15"/></svg>
<svg style="left:0;top:0" width="1" height="1"><path d="M907.95,517.30 h13.20" stroke="#8c8c8c" stroke-width="1.15"/><path d="M907.95,519.35 h13.20" stroke="#9c9c9c" stroke-width="1.15"/><path d="M907.95,521.40 h13.20" stroke="#b0b0b0" stroke-width="1.15"/><path d="M907.95,523.45 h13.20" stroke="#c4c4c4" stroke-width="1.15"/><path d="M907.95,525.50 h13.20" stroke="#d4d4d4" stroke-width="1.15"/><path d="M907.95,527.55 h13.20" stroke="#e2e2e2" stroke-width="1.15"/><path d="M911.30,529.60 h6.50" stroke="#ececec" stroke-width="1.15"/></svg>
<svg style="left:0;top:0" width="1" height="1"><path d="M931.00,517.30 h13.20" stroke="#8c8c8c" stroke-width="1.15"/><path d="M931.00,519.35 h13.20" stroke="#9c9c9c" stroke-width="1.15"/><path d="M931.00,521.40 h13.20" stroke="#b0b0b0" stroke-width="1.15"/><path d="M931.00,523.45 h13.20" stroke="#c4c4c4" stroke-width="1.15"/><path d="M931.00,525.50 h13.20" stroke="#d4d4d4" stroke-width="1.15"/><path d="M931.00,527.55 h13.20" stroke="#e2e2e2" stroke-width="1.15"/><path d="M937.70,529.60 h6.50" stroke="#ececec" stroke-width="1.15"/></svg>
<svg style="left:0;top:0" width="1" height="1"><path d="M965.80,517.30 h13.20" stroke="#8c8c8c" stroke-width="1.15"/><path d="M965.80,519.35 h13.20" stroke="#9c9c9c" stroke-width="1.15"/><path d="M965.80,521.40 h13.20" stroke="#b0b0b0" stroke-width="1.15"/><path d="M965.80,523.45 h13.20" stroke="#c4c4c4" stroke-width="1.15"/><path d="M965.80,525.50 h13.20" stroke="#d4d4d4" stroke-width="1.15"/><path d="M965.80,527.55 h13.20" stroke="#e2e2e2" stroke-width="1.15"/><path d="M965.80,529.60 h13.20" stroke="#ececec" stroke-width="1.15"/></svg>
<svg style="left:0;top:0" width="1" height="1"><circle cx="968.2" cy="552.3" r="1.25" fill="#d8d8d8"/><circle cx="972.9" cy="552.3" r="1.25" fill="#d8d8d8"/><circle cx="977.6" cy="552.3" r="1.25" fill="#d8d8d8"/></svg>
<svg style="left:0;top:0" width="1" height="1"><path d="M797.00,581.45 L801.00,585.75 L805.00,581.45" fill="none" stroke="#a8a8a8" stroke-width="1.1"/></svg>
<div class="t" style="left:812.80px;top:580px;font-size:10px;font-weight:bold;color:#e4e4e4;transform:scaleX(0.98);transform-origin:0 0">Type Options</div>
<div class="a" style="left:799.40px;top:600.60px;width:20.20px;height:20.10px;background:#383838;border:1px solid #464646;border-radius:2.5px"></div>
<div class="t" style="left:800.50px;top:604px;font-size:15px;font-weight:bold;color:#dcdcdc;font-family:'Liberation Serif';transform:scaleX(0.88);transform-origin:0 0">TT</div>
<div class="t" style="left:824.50px;top:604px;font-size:15px;font-weight:bold;color:#dcdcdc;font-family:'Liberation Serif';transform:scaleX(0.9);transform-origin:0 0">T</div>
<div class="t" style="left:834.50px;top:609px;font-size:9.5px;font-weight:bold;color:#dcdcdc;font-family:'Liberation Serif';transform:scaleX(0.9);transform-origin:0 0">T</div>
<div class="t" style="left:848.20px;top:604px;font-size:15px;font-weight:bold;color:#dcdcdc;font-family:'Liberation Serif';transform:scaleX(0.9);transform-origin:0 0">T</div>
<div class="t" style="left:859.50px;top:604px;font-size:8px;font-weight:bold;color:#dcdcdc;font-family:'Liberation Serif'">1</div>
<div class="t" style="left:871.80px;top:604px;font-size:15px;font-weight:bold;color:#dcdcdc;font-family:'Liberation Serif';transform:scaleX(0.9);transform-origin:0 0">T</div>
<div class="t" style="left:881.30px;top:612px;font-size:8px;font-weight:bold;color:#dcdcdc;font-family:'Liberation Serif'">1</div>
<div class="t" style="left:895.60px;top:604px;font-size:15px;font-weight:bold;color:#dcdcdc;font-family:'Liberation Serif';transform:scaleX(0.9);transform-origin:0 0">T</div>
<div class="a" style="left:895.10px;top:617.50px;width:12.00px;height:1.20px;background:#dcdcdc"></div>
<div class="t" style="left:917.80px;top:604px;font-size:15px;font-weight:bold;color:#dcdcdc;font-family:'Liberation Serif';transform:scaleX(0.95);transform-origin:0 0">T</div>
<div class="a" style="left:917.80px;top:610.80px;width:12.20px;height:1.20px;background:#dcdcdc"></div>
<div class="t" style="left:939.60px;top:603px;font-size:17px;color:#888888;font-family:'Liberation Serif'">1</div>
<div class="t" style="left:946.30px;top:604px;font-size:10.5px;color:#888888;font-family:'Liberation Serif'">st</div>
<div class="t" style="left:963.40px;top:603px;font-size:18px;font-weight:bold;color:#dcdcdc;font-family:'Liberation Serif';transform:scaleX(0.9);transform-origin:0 0">½</div>
<!--/PROPS-->
<!--FLOAT-->
<div class="a" style="left:496.40px;top:134.40px;width:217.90px;height:238.60px;background:transparent;border:4.6px solid #ff0000;border-radius:2.5px"></div>
<div class="a" style="left:501.00px;top:139.00px;width:208.70px;height:229.40px;background:#3a3a3a"></div>
<div class="a" style="left:502.00px;top:140.00px;width:206.70px;height:227.40px;background:#535353"></div>
<div class="a" style="left:502.00px;top:140.00px;width:206.70px;height:11.60px;background:#424242"></div>
<div class="a" style="left:562.00px;top:151.60px;width:146.70px;height:25.70px;background:#454545"></div>
<div class="a" style="left:562.00px;top:151.60px;width:1.00px;height:25.70px;background:#3a3a3a"></div>
<div class="a" style="left:624.30px;top:151.60px;width:1.00px;height:25.70px;background:#3a3a3a"></div>
<div class="a" style="left:562.00px;top:176.30px;width:146.70px;height:1.00px;background:#3e3e3e"></div>
<svg style="left:0;top:0" width="1" height="1"><g fill="none" stroke="#d0d0d0" stroke-width="1.2"><path d="M682.3,143.6 L679.6,145.6 L682.3,147.6 M685.8,143.6 L683.1,145.6 L685.8,147.6"/><path d="M697.5,143.3 L702.5,148 M702.5,143.3 L697.5,148" stroke-width="1.6"/></g></svg>
<div class="t" style="left:511.40px;top:159px;font-size:10px;font-weight:bold;color:#efefef;transform:scaleX(0.97);transform-origin:0 0">Character</div>
<div class="t" style="left:570.60px;top:159px;font-size:10px;font-weight:bold;color:#a9a9a9;transform:scaleX(0.93);transform-origin:0 0">Paragraph</div>
<svg style="left:0;top:0" width="1" height="1"><g stroke="#c8c8c8" stroke-width="0.9"><path d="M693.2,161.3 H703"/><path d="M693.2,162.9 H703"/><path d="M693.2,164.5 H703"/><path d="M693.2,166.1 H703"/><path d="M693.2,167.7 H703"/></g></svg>
<div class="a" style="left:507.90px;top:191.60px;width:112.80px;height:15.00px;background:#454545;border:1px solid #616161;border-radius:2.5px"></div>
<div class="a" style="left:607.90px;top:192.60px;width:1.00px;height:13.00px;background:#555555"></div>
<svg style="left:0;top:0" width="1" height="1"><path d="M611.50,197.45 L614.80,200.75 L618.10,197.45" fill="none" stroke="#b0b0b0" stroke-width="1.05"/></svg>
<div class="t" style="left:511.40px;top:195px;font-size:10px;color:#e6e6e6;transform:scaleX(0.97);transform-origin:0 0">Roboto</div>
<div class="a" style="left:632.90px;top:191.60px;width:69.70px;height:15.00px;background:#454545;border:1px solid #616161;border-radius:2.5px"></div>
<div class="a" style="left:688.60px;top:192.60px;width:1.00px;height:13.00px;background:#555555"></div>
<svg style="left:0;top:0" width="1" height="1"><path d="M692.80,197.45 L696.10,200.75 L699.40,197.45" fill="none" stroke="#b0b0b0" stroke-width="1.05"/></svg>
<div class="t" style="left:637.40px;top:195px;font-size:10px;color:#e6e6e6;transform:scaleX(0.95);transform-origin:0 0">Bold</div>
<div class="t" style="left:506.70px;top:221px;font-size:8.5px;color:#d6d6d6;font-family:'Liberation Serif';transform:scaleX(1.2);transform-origin:0 0">T</div>
<div class="t" style="left:511.30px;top:212px;font-size:19px;color:#d6d6d6;font-family:'Liberation Serif'">T</div>
<div class="a" style="left:527.10px;top:214.30px;width:70.00px;height:14.30px;background:#454545;border:1px solid #616161;border-radius:2.5px"></div>
<div class="a" style="left:583.60px;top:215.30px;width:1.00px;height:12.30px;background:#555555"></div>
<svg style="left:0;top:0" width="1" height="1"><path d="M587.55,219.80 L590.85,223.10 L594.15,219.80" fill="none" stroke="#b0b0b0" stroke-width="1.05"/></svg>
<div class="t" style="left:530.70px;top:218px;font-size:10px;color:#e6e6e6;transform:scaleX(0.93);transform-origin:0 0">12.52 pt</div>
<svg style="left:0;top:0" width="1" height="1"><g fill="none" stroke="#d6d6d6" stroke-width="1"><path d="M617.6,221.8 V228.0"/><path d="M620.2,220.8 H631 M620.2,229.70000000000002 H631" stroke-width="1"/></g><path d="M615.9,223.10000000000002 L617.6,220.8 L619.3,223.10000000000002 Z M615.9,226.70000000000002 L617.6,229.0 L619.3,226.70000000000002 Z" fill="#d6d6d6"/></svg>
<div class="t" style="left:622.50px;top:213px;font-size:8.3px;color:#d6d6d6">A</div>
<div class="t" style="left:622.50px;top:221px;font-size:8.3px;color:#d6d6d6">A</div>
<div class="a" style="left:635.70px;top:214.30px;width:66.40px;height:14.30px;background:#454545;border:1px solid #616161;border-radius:2.5px"></div>
<div class="a" style="left:688.60px;top:215.30px;width:1.00px;height:12.30px;background:#555555"></div>
<svg style="left:0;top:0" width="1" height="1"><path d="M692.55,219.80 L695.85,223.10 L699.15,219.80" fill="none" stroke="#b0b0b0" stroke-width="1.05"/></svg>
<div class="t" style="left:640.00px;top:218px;font-size:10px;color:#e6e6e6;transform:scaleX(0.93);transform-origin:0 0">8.94 pt</div>
<div class="t" style="left:506.60px;top:234px;font-size:12.3px;color:#d6d6d6;transform:scaleX(0.86);transform-origin:0 0">V/A</div>
<svg style="left:0;top:0" width="1" height="1"><path d="M517,247.5 H524" stroke="#d6d6d6" stroke-width="1"/><path d="M515.7,247.5 L518.4,245.7 V249.29999999999998 Z" fill="#d6d6d6"/></svg>
<div class="a" style="left:527.10px;top:233.60px;width:70.00px;height:14.30px;background:#454545;border:1px solid #616161;border-radius:2.5px"></div>
<div class="a" style="left:583.60px;top:234.60px;width:1.00px;height:12.30px;background:#555555"></div>
<svg style="left:0;top:0" width="1" height="1"><path d="M587.55,239.10 L590.85,242.40 L594.15,239.10" fill="none" stroke="#b0b0b0" stroke-width="1.05"/></svg>
<div class="t" style="left:530.70px;top:237px;font-size:10px;color:#e6e6e6;transform:scaleX(0.93);transform-origin:0 0">Metrics</div>
<svg style="left:0;top:0" width="1" height="1"><rect x="615" y="234.1" width="17.5" height="10.2" fill="#d6d6d6"/><path d="M616,247.5 H631.5" stroke="#d6d6d6" stroke-width="1"/><path d="M615,247.5 L617.8,245.6 V249.4 Z M632.5,247.5 L629.7,245.6 V249.4 Z" fill="#d6d6d6"/></svg>
<div class="t" style="left:616.60px;top:234px;font-size:11px;font-weight:bold;color:#555555;transform:scaleX(0.9);transform-origin:0 0">VA</div>
<div class="a" style="left:635.70px;top:233.60px;width:66.40px;height:14.40px;background:#454545;border:1px solid #616161;border-radius:2.5px"></div>
<div class="a" style="left:688.60px;top:234.60px;width:1.00px;height:12.40px;background:#555555"></div>
<svg style="left:0;top:0" width="1" height="1"><path d="M692.55,239.15 L695.85,242.45 L699.15,239.15" fill="none" stroke="#b0b0b0" stroke-width="1.05"/></svg>
<div class="t" style="left:640.40px;top:237px;font-size:10px;color:#e6e6e6;transform:scaleX(0.93);transform-origin:0 0">0</div>
<svg style="left:0;top:0" width="1" height="1"><path d="M508.6,255.8 V263.3" stroke="#d6d6d6" stroke-width="1.1"/><path d="M506.8,256.7 L508.6,254.10000000000002 L510.4,256.7 Z M506.8,262.90000000000003 L508.6,265.5 L510.4,262.90000000000003 Z" fill="#d6d6d6"/></svg>
<div class="t" style="left:513.60px;top:252px;font-size:17.4px;color:#d6d6d6;font-family:'Liberation Serif'">T</div>
<div class="a" style="left:526.40px;top:252.00px;width:51.20px;height:15.00px;background:#454545;border:1px solid #616161;border-radius:2px"></div>
<div class="t" style="left:530.70px;top:256px;font-size:10px;color:#e6e6e6;transform:scaleX(0.93);transform-origin:0 0">100%</div>
<div class="t" style="left:634.80px;top:252px;font-size:14.5px;font-weight:bold;color:#d6d6d6;font-family:'Liberation Serif';transform:scaleX(0.95);transform-origin:0 0">T</div>
<svg style="left:0;top:0" width="1" height="1"><path d="M633.3,266.5 H648.5" stroke="#d6d6d6" stroke-width="1"/><path d="M631.8,266.5 L634.5999999999999,264.7 V268.3 Z M650.0,266.5 L647.1999999999999,264.7 V268.3 Z" fill="#d6d6d6"/></svg>
<div class="a" style="left:651.40px;top:252.00px;width:51.00px;height:15.00px;background:#454545;border:1px solid #616161;border-radius:2px"></div>
<div class="t" style="left:655.70px;top:256px;font-size:10px;color:#e6e6e6;transform:scaleX(0.93);transform-origin:0 0">100%</div>
<div class="t" style="left:508.00px;top:273px;font-size:11.5px;color:#d6d6d6">A</div>
<div class="t" style="left:516.60px;top:273px;font-size:7px;color:#d6d6d6">a</div>
<svg style="left:0;top:0" width="1" height="1"><path d="M508,284.1 H516 M516.6,280.2 H522" stroke="#d6d6d6" stroke-width="1"/><path d="M519.5,283.8 V287.90000000000003" stroke="#d6d6d6" stroke-width="1"/><path d="M517.8,284.6 L519.5,282.2 L521.2,284.6 Z" fill="#d6d6d6"/></svg>
<div class="a" style="left:527.60px;top:272.90px;width:51.00px;height:14.70px;background:#454545;border:1px solid #616161;border-radius:2px"></div>
<div class="t" style="left:531.40px;top:276px;font-size:10px;color:#e6e6e6;transform:scaleX(0.93);transform-origin:0 0">-5 pt</div>
<div class="t" style="left:619.30px;top:276px;font-size:10px;color:#c6c6c6;transform:scaleX(0.93);transform-origin:0 0">Color:</div>
<div class="a" style="left:651.40px;top:271.40px;width:52.20px;height:17.60px;background:#0b3598;border:1px solid #353535"></div>
<div class="a" style="left:559.50px;top:294.50px;width:21.70px;height:18.50px;background:#383838"></div>
<div class="t" style="left:518.60px;top:296px;font-size:14.5px;font-weight:bold;color:#dcdcdc;font-family:'Liberation Serif';transform:scaleX(0.9);transform-origin:0 0">T</div>
<div class="t" style="left:543.20px;top:296px;font-size:14.5px;font-weight:bold;color:#dcdcdc;font-family:'Liberation Serif';transform:scaleX(0.9);transform-origin:0 0;font-style:italic">T</div>
<div class="t" style="left:561.50px;top:296px;font-size:14.5px;font-weight:bold;color:#dcdcdc;font-family:'Liberation Serif';transform:scaleX(0.85);transform-origin:0 0">TT</div>
<div class="t" style="left:585.70px;top:296px;font-size:14.5px;font-weight:bold;color:#dcdcdc;font-family:'Liberation Serif';transform:scaleX(0.9);transform-origin:0 0">T</div>
<div class="t" style="left:595.40px;top:302px;font-size:9px;font-weight:bold;color:#dcdcdc;font-family:'Liberation Serif';transform:scaleX(0.9);transform-origin:0 0">T</div>
<div class="t" style="left:609.10px;top:296px;font-size:14.5px;font-weight:bold;color:#dcdcdc;font-family:'Liberation Serif';transform:scaleX(0.9);transform-origin:0 0">T</div>
<div class="t" style="left:619.80px;top:297px;font-size:8px;font-weight:bold;color:#dcdcdc;font-family:'Liberation Serif'">1</div>
<div class="t" style="left:632.80px;top:296px;font-size:14.5px;font-weight:bold;color:#dcdcdc;font-family:'Liberation Serif';transform:scaleX(0.9);transform-origin:0 0">T</div>
<div class="t" style="left:641.60px;top:305px;font-size:8px;font-weight:bold;color:#dcdcdc;font-family:'Liberation Serif'">1</div>
<div class="t" style="left:656.20px;top:296px;font-size:14.5px;font-weight:bold;color:#dcdcdc;font-family:'Liberation Serif';transform:scaleX(0.9);transform-origin:0 0">T</div>
<div class="a" style="left:655.90px;top:309.80px;width:12.00px;height:1.20px;background:#dcdcdc"></div>
<div class="t" style="left:679.40px;top:296px;font-size:14.5px;font-weight:bold;color:#dcdcdc;font-family:'Liberation Serif';transform:scaleX(0.9);transform-origin:0 0">T</div>
<div class="a" style="left:679.00px;top:302.90px;width:11.80px;height:1.20px;background:#dcdcdc"></div>
<div class="t" style="left:520.40px;top:323px;font-size:15px;color:#8c8c8c;font-family:'Liberation Serif'">fi</div>
<svg style="left:0;top:0" width="1" height="1"><g fill="none" stroke="#8c8c8c" stroke-width="1.2"><ellipse cx="548.6" cy="330.3" rx="3" ry="4.2" transform="rotate(35 548.6 330.3)"/><path d="M550.8,327.2 Q553.5,327.6 556.6,325.4"/></g></svg>
<div class="t" style="left:564.30px;top:323px;font-size:14.5px;font-weight:bold;color:#c8c8c8;font-family:'Liberation Serif'">ſt</div>
<div class="t" style="left:586.50px;top:324px;font-size:15px;color:#8c8c8c;font-family:'Liberation Serif'">𝒜</div>
<div class="t" style="left:607.60px;top:324px;font-size:14.5px;color:#8c8c8c;font-family:'Liberation Serif'">aa</div>
<svg style="left:0;top:0" width="1" height="1"><path d="M608.5,324.4 H623" stroke="#8c8c8c" stroke-width="0.9"/><path d="M624.5,324.4 L621.3,322.6 V326.2 Z" fill="#8c8c8c"/></svg>
<div class="t" style="left:634.20px;top:322px;font-size:15.5px;color:#8c8c8c;font-family:'Liberation Serif';transform:scaleX(0.95);transform-origin:0 0;font-style:italic">T</div>
<div class="t" style="left:655.20px;top:322px;font-size:15.5px;color:#8c8c8c;font-family:'Liberation Serif'">1</div>
<div class="t" style="left:662.30px;top:322px;font-size:10px;color:#8c8c8c;font-family:'Liberation Serif'">st</div>
<div class="t" style="left:678.40px;top:322px;font-size:17.5px;font-weight:bold;color:#bcbcbc;font-family:'Liberation Serif';transform:scaleX(0.9);transform-origin:0 0">½</div>
<div class="a" style="left:508.00px;top:346.10px;width:108.40px;height:17.50px;background:#454545;border:1px solid #616161;border-radius:2.5px"></div>
<svg style="left:0;top:0" width="1" height="1"><path d="M604.10,353.20 L607.40,356.50 L610.70,353.20" fill="none" stroke="#b0b0b0" stroke-width="1.05"/></svg>
<div class="t" style="left:515.70px;top:350px;font-size:10px;color:#e6e6e6;transform:scaleX(0.975);transform-origin:0 0">English: UK</div>
<div class="t" style="left:620.90px;top:345px;font-size:13px;color:#d0d0d0;font-family:'Liberation Serif'">a</div>
<div class="t" style="left:626.60px;top:348px;font-size:13.5px;color:#d0d0d0;font-family:'Liberation Serif'">a</div>
<div class="a" style="left:640.40px;top:346.10px;width:62.50px;height:17.50px;background:#454545;border:1px solid #616161;border-radius:2.5px"></div>
<svg style="left:0;top:0" width="1" height="1"><path d="M690.60,353.20 L693.90,356.50 L697.20,353.20" fill="none" stroke="#b0b0b0" stroke-width="1.05"/></svg>
<div class="t" style="left:647.90px;top:350px;font-size:10px;color:#e6e6e6;transform:scaleX(0.95);transform-origin:0 0">Sharp</div>
<svg style="left:0;top:0" width="1" height="1"><path d="M508.6,292.3 H580.5" stroke="#ff0a0a" stroke-width="3.6" stroke-linecap="round"/><path d="M604.8,277.9 L576.3,277.3 L577.4,275.4 Q577.7,273.5 575.9,274 L567.3,279.5 L575.9,285 Q577.7,285.6 577.4,283.7 L576.3,281.9 L604.8,281.2 Z" fill="#d81414"/></svg>
<div class="a" style="left:514.10px;top:305.00px;width:104.00px;height:14.10px;background:#ffffe1;border:1px solid #111"></div>
<div class="t" style="left:519.10px;top:309px;font-size:10px;color:#262626;transform:scaleX(0.945);transform-origin:0 0">Set the baseline shift</div>
<!--/FLOAT-->
</body></html>
